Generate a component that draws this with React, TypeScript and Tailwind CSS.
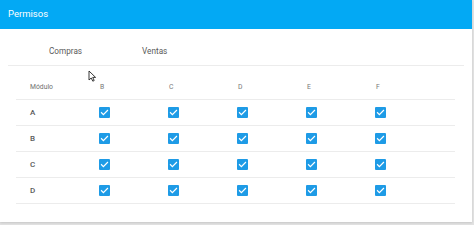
import React from "react";

const cols = ["B", "C", "D", "E", "F"];
const rows = ["A", "B", "C", "D"];

function Check() {
  return (
    <div className="w-[11px] h-[11px] bg-[#1e9be6] rounded-[1px] flex items-center justify-center">
      <svg width="9" height="9" viewBox="0 0 24 24" fill="none">
        <path d="M4 12.5l5 5L20 6.5" stroke="white" strokeWidth="3.2" strokeLinecap="square" />
      </svg>
    </div>
  );
}

export default function App() {
  return (
    <div
      className="relative w-[474px] h-[225px] bg-[#e2e2e2] overflow-hidden"
      style={{ fontFamily: "Roboto, 'Liberation Sans', sans-serif" }}
    >
      <div className="w-[472px] h-[222px] bg-white shadow-[0_1px_2px_rgba(0,0,0,0.12)]">
        <div className="h-[29px] bg-[#03a9f4] flex items-center px-[8px] text-white text-[9.5px]">
          Permisos
        </div>
        <div className="mx-[8px] h-[37px] border-b border-[#ececec] flex items-start pt-[16px] pl-[11px]">
          <div className="px-[30px] text-[8.2px] leading-[12px] text-[#5a5a5a]">Compras</div>
          <div className="px-[30px] text-[8.2px] leading-[12px] text-[#5a5a5a]">Ventas</div>
        </div>
        <div className="ml-[16px] w-[439px] mt-[8px]">
          <div className="h-[26px] border-b border-[#ececec] flex items-center">
            <div className="w-[83px] pl-[14px] text-[6.8px] leading-[10px] text-[#6f6f6f]">Módulo</div>
            {cols.map((c) => (
              <div key={c} className="w-[69px] pl-[1px] text-[6.8px] leading-[10px] text-[#777777]">
                {c}
              </div>
            ))}
          </div>
          {rows.map((r) => (
            <div key={r} className="h-[26px] border-b border-[#ececec] flex items-center">
              <div className="w-[83px] pl-[14px] text-[8px] font-medium text-[#5a5a5a]">{r}</div>
              {cols.map((c) => (
                <div key={c} className="w-[69px]">
                  <Check />
                </div>
              ))}
            </div>
          ))}
        </div>
      </div>
      <svg className="absolute left-[88px] top-[70px]" width="9" height="12" viewBox="0 0 9 12">
        <path d="M1 1 L1 10 L3.2 8 L4.8 11.2 L6.2 10.5 L4.7 7.4 L7.6 7.4 Z" fill="white" stroke="#222" strokeWidth="0.9" strokeLinejoin="round" />
      </svg>
    </div>
  );
}
